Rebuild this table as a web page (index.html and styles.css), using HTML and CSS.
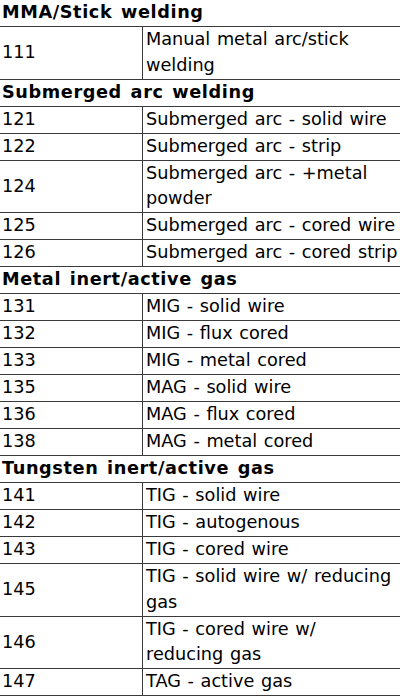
FILE: index.html
```html
<!DOCTYPE html>
<html>
<head>
<meta charset="utf-8">
<link rel="stylesheet" href="styles.css">
</head>
<body>
<table class="codes">
  <colgroup><col class="col-num"><col class="col-desc"></colgroup>
  <tr class="group"><td colspan="2">MMA/Stick welding</td></tr>
  <tr><td class="num">111</td><td class="desc">Manual metal arc/stick welding</td></tr>
  <tr class="group"><td colspan="2">Submerged arc welding</td></tr>
  <tr><td class="num">121</td><td class="desc">Submerged arc - solid wire</td></tr>
  <tr><td class="num">122</td><td class="desc">Submerged arc - strip</td></tr>
  <tr><td class="num">124</td><td class="desc">Submerged arc - +metal powder</td></tr>
  <tr><td class="num">125</td><td class="desc">Submerged arc - cored wire</td></tr>
  <tr><td class="num">126</td><td class="desc">Submerged arc - cored strip</td></tr>
  <tr class="group"><td colspan="2">Metal inert/active gas</td></tr>
  <tr><td class="num">131</td><td class="desc">MIG - solid wire</td></tr>
  <tr><td class="num">132</td><td class="desc">MIG - flux cored</td></tr>
  <tr><td class="num">133</td><td class="desc">MIG - metal cored</td></tr>
  <tr><td class="num">135</td><td class="desc">MAG - solid wire</td></tr>
  <tr><td class="num">136</td><td class="desc">MAG - flux cored</td></tr>
  <tr><td class="num">138</td><td class="desc">MAG - metal cored</td></tr>
  <tr class="group"><td colspan="2">Tungsten inert/active gas</td></tr>
  <tr><td class="num">141</td><td class="desc">TIG - solid wire</td></tr>
  <tr><td class="num">142</td><td class="desc">TIG - autogenous</td></tr>
  <tr><td class="num">143</td><td class="desc">TIG - cored wire</td></tr>
  <tr><td class="num">145</td><td class="desc">TIG - solid wire w/ reducing gas</td></tr>
  <tr><td class="num">146</td><td class="desc">TIG - cored wire w/ reducing gas</td></tr>
  <tr><td class="num">147</td><td class="desc">TAG - active gas</td></tr>
</table>
</body>
</html>
```
FILE: styles.css
```css
html, body {
  margin: 0;
  padding: 0;
  background: #ffffff;
}
body {
  overflow: hidden;
}
.codes {
  border-collapse: collapse;
  table-layout: fixed;
  width: 401px;
  margin: -1px 0 0 -1px;
  font-family: "DejaVu Sans", Verdana, sans-serif;
  font-size: 17.7px;
  line-height: 25.5px;
  color: #000;
}
.col-num {
  width: 143px;
}
.col-desc {
  width: 258px;
}
.codes td {
  border: 1px solid #3a3a3a;
  padding: 0.25px 0 0.25px 3px;
  vertical-align: middle;
}
.codes td.desc {
  padding-left: 3px;
  padding-right: 1.5px;
  word-spacing: 1px;
}
.codes td.num {
  padding-left: 2px;
}
.codes .group td {
  font-weight: bold;
  letter-spacing: 0.6px;
  word-spacing: 2px;
  padding-left: 2px;
}
```
